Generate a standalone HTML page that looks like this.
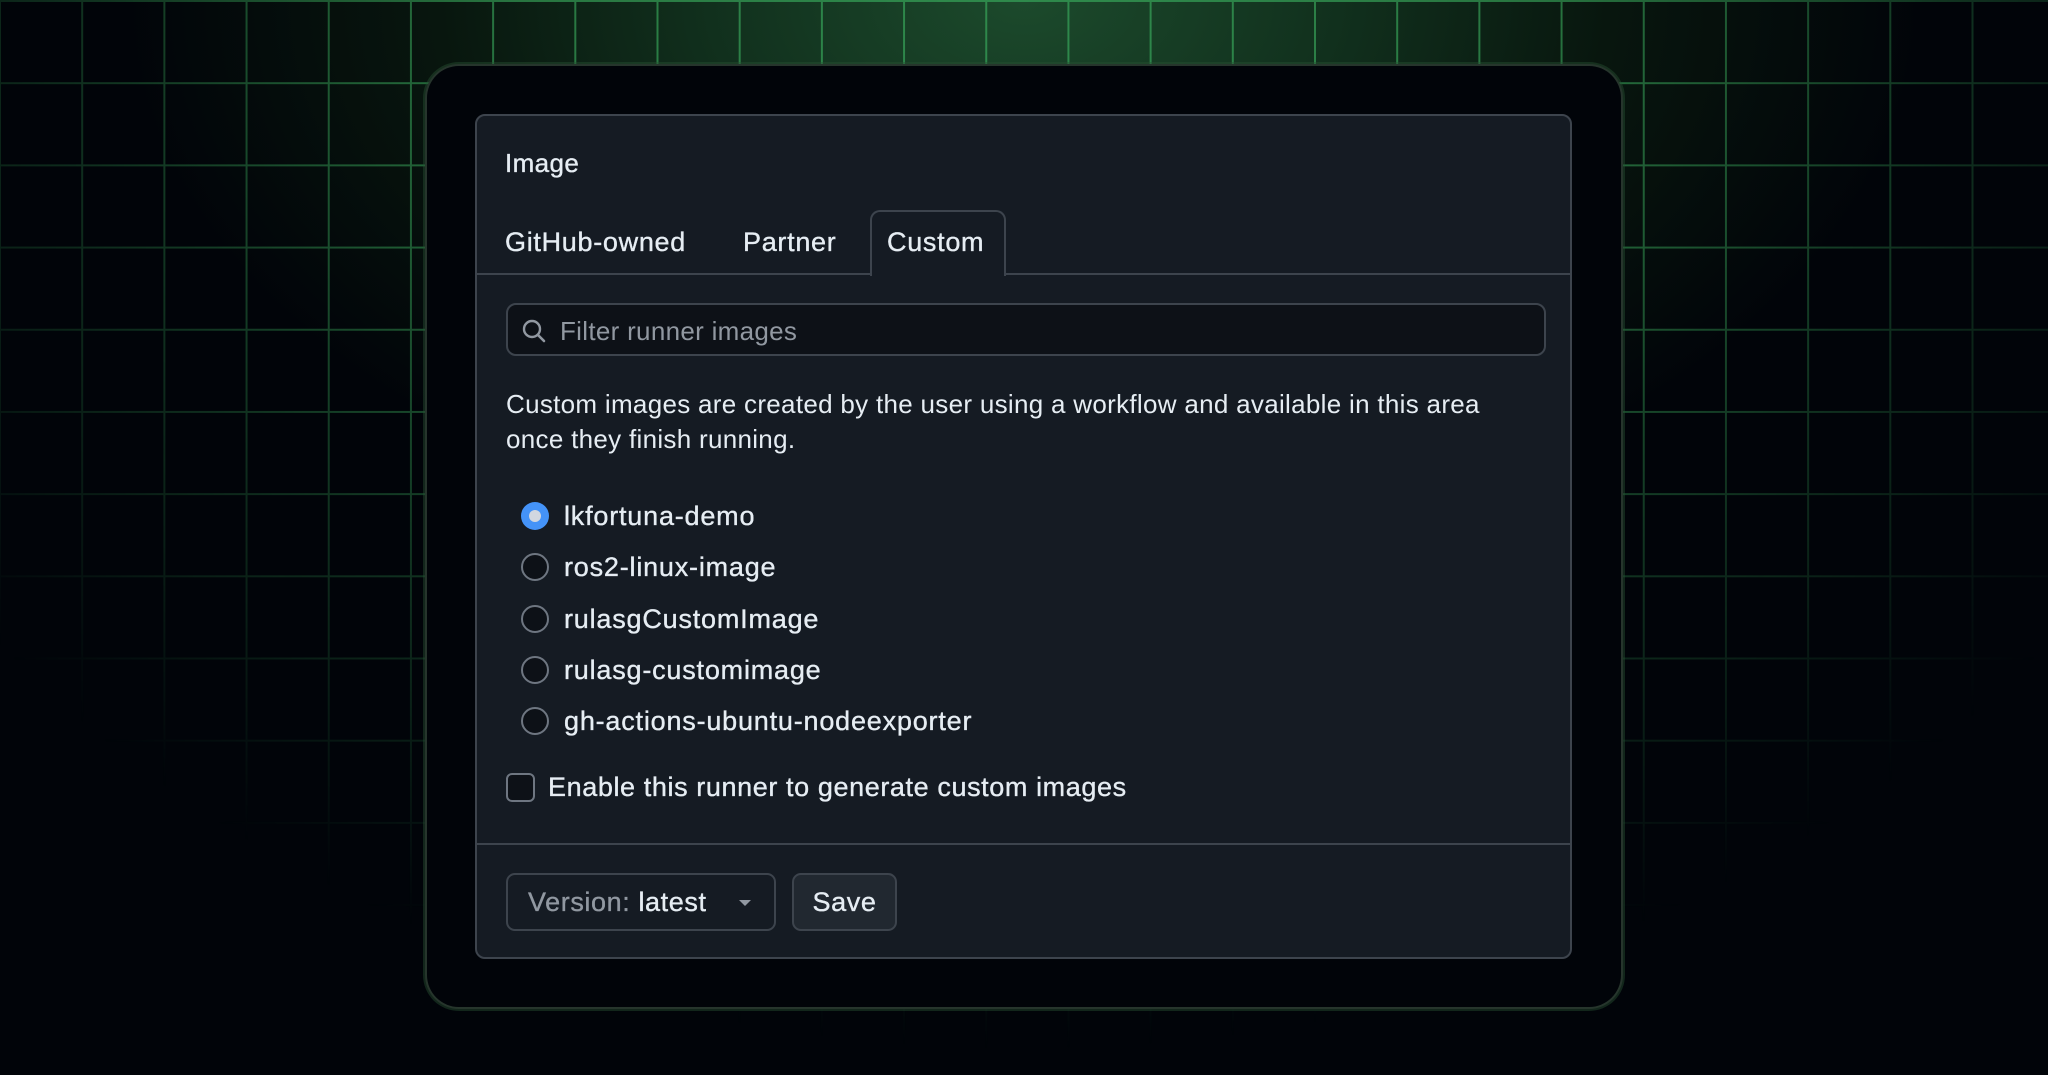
<!DOCTYPE html>
<html><head><meta charset="utf-8">
<style>
html,body{margin:0;padding:0}
body{width:2048px;height:1075px;overflow:hidden;position:relative;background:#010409;font-family:"Liberation Sans",sans-serif;color:#e6edf3}
.glow{position:absolute;inset:0;background:radial-gradient(ellipse 900px 560px at 1024px 0px,#1c4a2c 0%,#11301d 35%,#08160e 65%,rgba(1,4,9,0) 100%)}
.grid{position:absolute;inset:0;
background-image:linear-gradient(to right,#2f8a4c 0 2px,transparent 2px),linear-gradient(to bottom,#2f8a4c 0 2px,transparent 2px);
background-size:82.2px 82.2px;background-position:-1px 0;
-webkit-mask-image:radial-gradient(ellipse 1300px 1050px at 1024px 0px,rgba(0,0,0,1) 0%,rgba(0,0,0,.8) 40%,rgba(0,0,0,.3) 75%,rgba(0,0,0,0) 100%);
mask-image:radial-gradient(ellipse 1300px 1050px at 1024px 0px,rgba(0,0,0,1) 0%,rgba(0,0,0,.8) 40%,rgba(0,0,0,.3) 75%,rgba(0,0,0,0) 100%)}
.frame{position:absolute;left:427px;top:66px;width:1194px;height:941px;border-radius:32px;background:#010409;box-shadow:0 0 0 2px #26352c,0 0 0 4px rgba(40,80,52,.45)}
.card{position:absolute;left:475px;top:114px;width:1097px;height:845px;box-sizing:border-box;border:2px solid #3d444d;border-radius:10px;background:#151b23}
.abs{position:absolute}
.lbl{font-size:26px;letter-spacing:0.4px;-webkit-text-stroke:0.35px #e6edf3;color:#e6edf3}
.tab{font-size:27px;letter-spacing:0.7px;-webkit-text-stroke:0.35px #e6edf3}
.tabline{position:absolute;left:0;right:0;top:157px;height:2px;background:#3d444d}
.ctab{position:absolute;left:393px;top:94px;width:132px;height:64px;border:2px solid #3d444d;border-bottom:none;border-radius:10px 10px 0 0;background:#151b23}
.search{position:absolute;left:29px;top:187px;width:1040px;height:53px;box-sizing:border-box;border:2px solid #3d444d;border-radius:10px;background:#0d1117}
.para{position:absolute;left:29px;top:271px;width:1020px;font-size:26px;letter-spacing:0.3px;line-height:35px;color:#e6edf3}
.radio{position:absolute;width:28px;height:28px;box-sizing:border-box;border:2px solid #6e7681;border-radius:50%;background:#0d1117}
.radio.on{border:none;background:#4493f8}
.radio.on::after{content:"";position:absolute;left:8px;top:8px;width:12px;height:12px;border-radius:50%;background:#d1d7e0}
.rl{position:absolute;left:87px;font-size:27px;letter-spacing:0.8px;-webkit-text-stroke:0.35px #e6edf3}
.divider{position:absolute;left:0;right:0;top:727px;height:2px;background:#3d444d}
.btn{position:absolute;top:757px;height:58px;box-sizing:border-box;border:2px solid #3d444d;border-radius:9px;background:#212830;font-size:27px;letter-spacing:0.6px;line-height:54px;-webkit-text-stroke:0.35px #e6edf3}
</style></head><body>
<div class="glow"></div>
<div class="grid"></div>
<div class="frame"></div>
<div class="card">
  <div class="abs lbl" style="left:28px;top:32px">Image</div>
  <div class="tabline"></div>
  <div class="ctab"></div>
  <div class="abs tab" style="left:28px;top:111px">GitHub-owned</div>
  <div class="abs tab" style="left:266px;top:111px">Partner</div>
  <div class="abs tab" style="left:410px;top:111px">Custom</div>
  <div class="search">
    <svg class="abs" style="left:13px;top:13px" width="26" height="26" viewBox="0 0 26 26"><circle cx="11" cy="11" r="8" fill="none" stroke="#9198a1" stroke-width="2.4"/><path d="M17 17l6 6" stroke="#9198a1" stroke-width="2.6" stroke-linecap="round"/></svg>
    <div class="abs" style="left:52px;top:11px;font-size:26px;letter-spacing:0.3px;color:#9198a1">Filter runner images</div>
  </div>
  <div class="para">Custom images are created by the user using a workflow and available in this area once they finish running.</div>
  <div class="radio on" style="left:44px;top:386px"></div>
  <div class="rl" style="top:385px">lkfortuna-demo</div>
  <div class="radio" style="left:44px;top:437px"></div>
  <div class="rl" style="top:436px">ros2-linux-image</div>
  <div class="radio" style="left:44px;top:489px"></div>
  <div class="rl" style="top:488px">rulasgCustomImage</div>
  <div class="radio" style="left:44px;top:540px"></div>
  <div class="rl" style="top:539px">rulasg-customimage</div>
  <div class="radio" style="left:44px;top:591px"></div>
  <div class="rl" style="top:590px">gh-actions-ubuntu-nodeexporter</div>
  <div class="abs" style="left:29px;top:657px;width:29px;height:29px;box-sizing:border-box;border:2px solid #6e7681;border-radius:6px;background:#0d1117"></div>
  <div class="rl" style="left:71px;top:656px;letter-spacing:0.6px">Enable this runner to generate custom images</div>
  <div class="divider"></div>
  <div class="btn" style="left:29px;width:270px;background:#151b23;padding-left:20px"><span style="color:#9198a1;-webkit-text-stroke:0.35px #9198a1">Version:</span> latest
    <svg class="abs" style="left:230px;top:24px" width="14" height="8" viewBox="0 0 14 8"><path d="M1 1h12L7 7z" fill="#9198a1"/></svg></div>
  <div class="btn" style="left:315px;width:105px;text-align:center">Save</div>
</div>
</body></html>
